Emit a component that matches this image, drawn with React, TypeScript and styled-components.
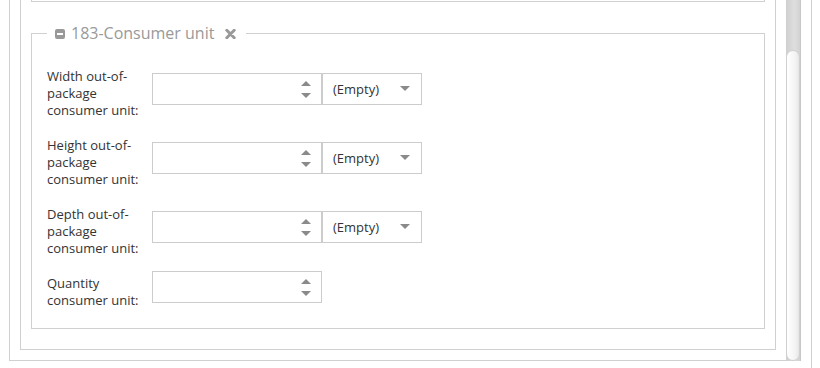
import React from 'react';
import styled, { createGlobalStyle } from 'styled-components';

const GlobalStyle = createGlobalStyle`
  html, body {
    margin: 0;
    padding: 0;
    background: #ffffff;
  }
  body {
    font-family: "Open Sans", "Liberation Sans", sans-serif;
  }
`;

const Page = styled.div`
  width: 820px;
  height: 368px;
  overflow: hidden;
  background: #ffffff;
`;

const Frame = styled.div`
  display: flex;
  width: 811px;
  height: 368px;
  border-right: 1px solid #d0d0d0;
`;

const ScrollArea = styled.div`
  display: flex;
  margin-left: 9px;
  width: 791px;
  height: 360px;
  border-left: 1px solid #d0d0d0;
  border-bottom: 1px solid #d0d0d0;
`;

const Content = styled.div`
  flex: 1;
  padding: 0 10px 10px 10px;
`;

const Panel = styled.div`
  height: 100%;
  box-sizing: border-box;
  border: 1px solid #d0d0d0;
  border-top: none;
  padding: 0 10px 20px 10px;
`;

const FieldsetTail = styled.div`
  height: 1px;
  border: 1px solid #d0d0d0;
  border-top: none;
`;

const Fieldset = styled.fieldset`
  margin: 21px 0 0 0;
  padding: 14px 15px 19px 15px;
  border: 1px solid #d0d0d0;
  min-width: 0;
`;

const Legend = styled.legend`
  display: flex;
  align-items: center;
  padding: 0 10px 0 8px;
  height: 21px;
  line-height: 21px;
  font-size: 16px;
  color: #999999;
`;

const LegendIcon = styled.svg`
  display: block;
  width: 10px;
  height: 10px;
  margin-right: 6px;
`;

const LegendText = styled.span`
  margin-right: 11px;
`;

const CloseIcon = styled.svg`
  display: block;
  width: 11px;
  height: 10px;
  margin-top: 1px;
`;

const Rows = styled.div`
  display: flex;
  flex-direction: column;
  gap: 8px;
`;

const Row = styled.div`
  display: flex;
  align-items: center;
`;

const Label = styled.label`
  width: 100px;
  margin-right: 5px;
  padding-top: 10px;
  font-size: 13px;
  line-height: 17px;
  color: #333333;
`;

const NumberBox = styled.div`
  position: relative;
  box-sizing: border-box;
  width: 170px;
  height: 32px;
  border: 1px solid #cccccc;
  background: #ffffff;
`;

const Spinner = styled.div`
  position: absolute;
  right: 10px;
  top: 7px;
  display: flex;
  flex-direction: column;
  gap: 7px;
`;

const Arrow = styled.span<{ $up?: boolean }>`
  display: block;
  width: 0;
  height: 0;
  border-left: 5px solid transparent;
  border-right: 5px solid transparent;
  ${({ $up }) => ($up ? 'border-bottom: 5px solid #8a8a8a;' : 'border-top: 5px solid #8a8a8a;')}
`;

const Select = styled.div`
  display: flex;
  align-items: center;
  justify-content: space-between;
  box-sizing: border-box;
  width: 100px;
  height: 32px;
  padding: 0 11px 0 10px;
  border: 1px solid #cccccc;
  font-size: 13px;
  color: #333333;
`;

const Scrollbar = styled.div`
  display: flex;
  flex-direction: column;
  width: 14px;
  margin-bottom: -1px;
  background: linear-gradient(to right, #cfcfcf, #dedede 60%, #d2d2d2);
  border-right: 1px solid #c8c8c8;
`;

const Thumb = styled.div`
  flex: 1;
  margin-top: 50px;
  border: 1px solid #d0d0d0;
  border-radius: 7px;
  background: linear-gradient(to right, #ffffff, #f3f3f3 70%, #e6e6e6);
`;

type Field = { label: string; unit?: boolean };

const fields: Field[] = [
  { label: 'Width out-of-package consumer unit:', unit: true },
  { label: 'Height out-of-package consumer unit:', unit: true },
  { label: 'Depth out-of-package consumer unit:', unit: true },
  { label: 'Quantity consumer unit:' },
];

const App = () => (
  <Page>
    <GlobalStyle />
    <Frame>
      <ScrollArea>
        <Content>
          <Panel>
            <FieldsetTail />
            <Fieldset>
              <Legend>
                <LegendIcon viewBox="0 0 10 10">
                  <rect x="0" y="0" width="10" height="10" rx="2" fill="#999999" />
                  <rect x="2" y="4" width="6" height="2" fill="#ffffff" />
                </LegendIcon>
                <LegendText>183-Consumer unit</LegendText>
                <CloseIcon viewBox="0 0 11 10">
                  <path d="M1.8 1.3 L9.2 8.7 M9.2 1.3 L1.8 8.7" stroke="#999999" strokeWidth="3" strokeLinecap="round" />
                </CloseIcon>
              </Legend>
              <Rows>
                {fields.map((f) => (
                  <Row key={f.label}>
                    <Label>{f.label}</Label>
                    <NumberBox>
                      <Spinner>
                        <Arrow $up />
                        <Arrow />
                      </Spinner>
                    </NumberBox>
                    {f.unit && (
                      <Select>
                        <span>(Empty)</span>
                        <Arrow />
                      </Select>
                    )}
                  </Row>
                ))}
              </Rows>
            </Fieldset>
          </Panel>
        </Content>
        <Scrollbar>
          <Thumb />
        </Scrollbar>
      </ScrollArea>
    </Frame>
  </Page>
);

export default App;
